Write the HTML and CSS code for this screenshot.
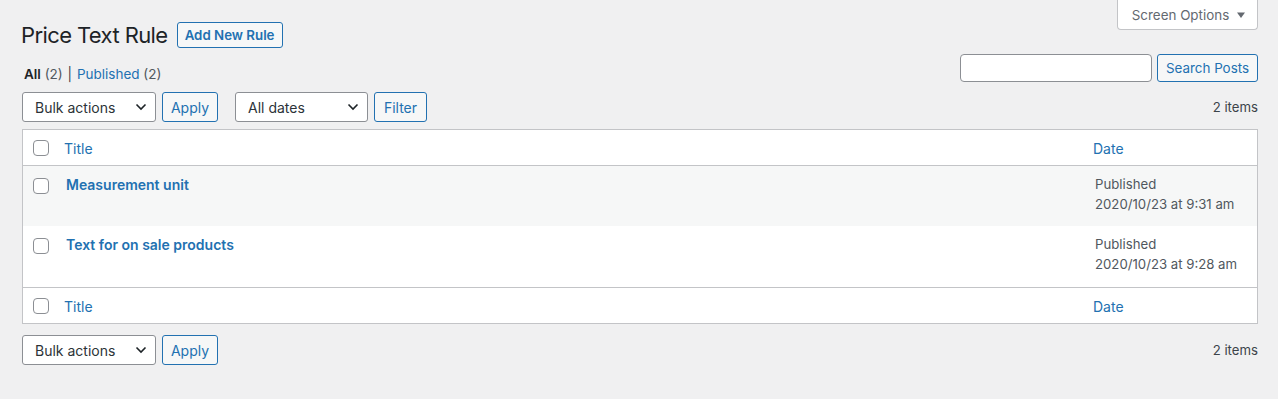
FILE: index.html
```html
<!DOCTYPE html>
<html>
<head>
<meta charset="utf-8">
<link rel="stylesheet" href="styles.css">
</head>
<body>
<div class="wrap">
  <div class="screen-options">
    <span>Screen Options</span>
    <svg class="tri" width="10" height="8" viewBox="0 0 10 8"><path d="M1 1.5h8L5 7z" fill="#646970"/></svg>
  </div>

  <div class="heading">
    <h1 class="title">Price Text Rule</h1>
    <a class="btn btn-strong">Add New Rule</a>
  </div>

  <div class="views-row">
    <div class="subsubsub">
      <span class="current">All</span> <span class="count">(2)</span>
      <span class="sep">|</span>
      <a class="link">Published</a> <span class="count">(2)</span>
    </div>
    <div class="search">
      <div class="input"></div>
      <a class="btn btn-search">Search Posts</a>
    </div>
  </div>

  <div class="tablenav top">
    <div class="actions">
      <div class="select sel-bulk"><span>Bulk actions</span><svg width="12" height="8" viewBox="0 0 12 8"><path d="M1.5 1.5l4.5 4.5 4.5-4.5" fill="none" stroke="#1d2327" stroke-width="1.6"/></svg></div>
      <a class="btn btn-apply">Apply</a>
      <div class="select sel-dates"><span>All dates</span><svg width="12" height="8" viewBox="0 0 12 8"><path d="M1.5 1.5l4.5 4.5 4.5-4.5" fill="none" stroke="#1d2327" stroke-width="1.6"/></svg></div>
      <a class="btn btn-filter">Filter</a>
    </div>
    <div class="items">2 items</div>
  </div>

  <table class="list">
    <colgroup><col class="c-cb"><col><col class="c-date"></colgroup>
    <thead>
      <tr><td class="cb"><span class="check"></span></td><th class="h-title"><a class="link">Title</a></th><th class="h-date"><a class="link">Date</a></th></tr>
    </thead>
    <tbody>
      <tr class="alt r1"><td class="cb row-cb"><span class="check"></span></td><td class="r-title"><a class="row-link">Measurement unit</a></td><td class="r-date">Published<br>2020/10/23 at 9:31 am</td></tr>
      <tr class="r2"><td class="cb row-cb"><span class="check"></span></td><td class="r-title"><a class="row-link">Text for on sale products</a></td><td class="r-date">Published<br>2020/10/23 at 9:28 am</td></tr>
    </tbody>
    <tfoot>
      <tr><td class="cb"><span class="check"></span></td><th class="h-title"><a class="link">Title</a></th><th class="h-date"><a class="link">Date</a></th></tr>
    </tfoot>
  </table>

  <div class="tablenav bottom">
    <div class="actions">
      <div class="select sel-bulk"><span>Bulk actions</span><svg width="12" height="8" viewBox="0 0 12 8"><path d="M1.5 1.5l4.5 4.5 4.5-4.5" fill="none" stroke="#1d2327" stroke-width="1.6"/></svg></div>
      <a class="btn btn-apply">Apply</a>
    </div>
    <div class="items">2 items</div>
  </div>
</div>
</body>
</html>
```

FILE: styles.css
```css
* { box-sizing: border-box; }
html, body { margin: 0; padding: 0; }
body {
  background: #f0f0f1;
  font-family: Inter, "Noto Sans", "Liberation Sans", sans-serif;
  font-size: 14px;
  color: #3c434a;
  width: 1278px;
  height: 399px;
  overflow: hidden;
}
.wrap {
  position: relative;
  padding: 22px 20px 0 22px;
}
.screen-options {
  position: absolute;
  top: 0;
  right: 20px;
  width: 141px;
  height: 30px;
  background: #fff;
  border: 1px solid #c3c4c7;
  border-top: none;
  border-radius: 0 0 4px 4px;
  display: flex;
  align-items: center;
  justify-content: center;
  gap: 7px;
  color: #646970;
  font-size: 13.4px;
  padding: 1px 0 0 3px;
}
.heading {
  display: flex;
  align-items: center;
  gap: 9px;
  height: 25px;
}
.title {
  margin: 0 0 0 -1px;
  font-size: 22px;
  letter-spacing: -0.6px;
  font-weight: 400;
  color: #1d2327;
  line-height: 25px;
  position: relative;
  top: 1px;
}
.btn {
  display: flex;
  align-items: center;
  justify-content: center;
  background: #f6f7f7;
  border: 1px solid #2271b1;
  border-radius: 3px;
  color: #2271b1;
  font-size: 14px;
  text-decoration: none;
}
.btn-strong {
  width: 106px;
  height: 26px;
  font-weight: 600;
  font-size: 13.3px;
}
.views-row {
  display: flex;
  justify-content: space-between;
  margin-top: 7px;
  height: 28px;
}
.subsubsub {
  align-self: flex-end;
  line-height: 16px;
  margin-left: 2px;
  font-size: 13.5px;
}
.current { color: #1d2327; font-weight: 600; }
.count { color: #50575e; }
.sep { color: #3c434a; margin: 0 1px; }
.link { color: #2271b1; text-decoration: none; }
.search { display: flex; gap: 5px; margin-right: 0; }
.input {
  width: 192px;
  height: 28px;
  background: #fff;
  border: 1px solid #8c8f94;
  border-radius: 4px;
}
.btn-search { width: 101px; height: 28px; font-size: 13.4px; }
.tablenav {
  display: flex;
  justify-content: space-between;
  align-items: center;
  height: 30px;
}
.tablenav.top { margin-top: 10px; margin-bottom: 7px; }
.tablenav.bottom { margin-top: 11px; }
.actions { display: flex; align-items: center; }
.select {
  height: 30px;
  background: #fff;
  border: 1px solid #8c8f94;
  border-radius: 3px;
  display: flex;
  align-items: center;
  justify-content: space-between;
  padding: 0 8px 0 12px;
  color: #2c3338;
  font-size: 14px;
}
.sel-bulk { width: 134px; }
.sel-dates { width: 133px; margin-left: 17px; }
.btn-apply { width: 56px; height: 30px; margin-left: 6px; }
.btn-filter { width: 53px; height: 30px; margin-left: 6px; }
.items { color: #3c434a; font-size: 13.2px; }
.list {
  width: 100%;
  border: 1px solid #c3c4c7;
  border-collapse: separate;
  border-spacing: 0;
  table-layout: fixed;
  background: #fff;
}
.c-cb { width: 33px; }
.c-date { width: 171px; }
.list td, .list th {
  padding: 0;
  text-align: left;
  font-weight: 400;
  vertical-align: top;
}
.list thead td, .list thead th {
  height: 36px;
  border-bottom: 1px solid #c3c4c7;
  vertical-align: middle;
}
.list tfoot td, .list tfoot th {
  height: 36px;
  border-top: 1px solid #c3c4c7;
  vertical-align: middle;
}
.list .cb { padding-left: 10px; }
.check {
  display: block;
  width: 16px;
  height: 16px;
  border: 1px solid #8c8f94;
  border-radius: 4px;
  background: #fff;
}
.list .h-title { padding-left: 8px; font-size: 14px; }
.list .h-date { padding-left: 7px; font-size: 14px; }
.list thead .h-title a, .list tfoot .h-title a, .list .h-date a { position: relative; top: 1px; }
.list tr.r1 td { height: 60px; }
.list tr.r2 td { height: 61px; }
tbody tr.alt { background: #f6f7f7; }
.list .row-cb { padding-top: 12px; }
.list .r-title { padding: 9px 0 0 10px; line-height: 20px; }
.row-link {
  color: #2271b1;
  font-weight: 600;
  font-size: 14px;
  text-decoration: none;
}
.list .r-date {
  padding: 9px 0 0 9px;
  line-height: 19.5px;
  color: #50575e;
  font-size: 13.2px;
}
```
